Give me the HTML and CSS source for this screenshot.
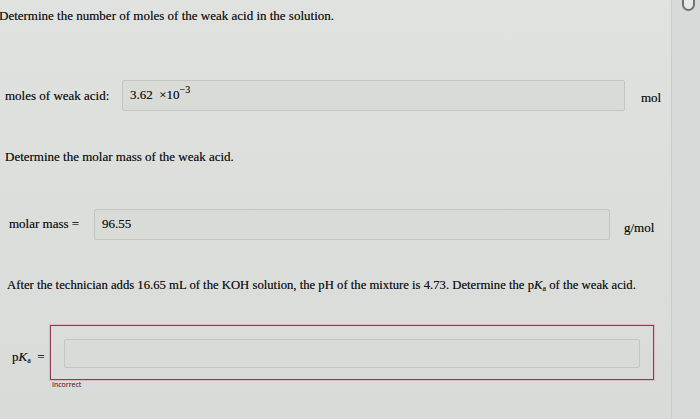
FILE: index.html
```html
<!DOCTYPE html>
<html>
<head>
<meta charset="utf-8">
<link rel="stylesheet" href="styles.css">
</head>
<body>
<div class="screen">
  <div class="page">
    <p class="q q1">Determine the number of moles of the weak acid in the solution.</p>
    <div class="row row1">
      <span class="label l1">moles of weak acid:</span>
      <div class="field f1"><span class="val">3.62 &nbsp;×10<sup>−3</sup></span></div>
      <span class="unit u1">mol</span>
    </div>
    <p class="q q2">Determine the molar mass of the weak acid.</p>
    <div class="row row2">
      <span class="label l2">molar mass =</span>
      <div class="field f2"><span class="val">96.55</span></div>
      <span class="unit u2">g/mol</span>
    </div>
    <p class="q q3">After the technician adds 16.65 mL of the KOH solution, the pH of the mixture is 4.73. Determine the p<i>K</i><sub>a</sub> of the weak acid.</p>
    <div class="row row3">
      <span class="label l3">p<i>K</i><sub>a</sub> &nbsp;=</span>
      <div class="wrong">
        <div class="field f3"></div>
        <span class="incorrect">Incorrect</span>
      </div>
    </div>
  </div>
  <div class="side">
    <span class="badge"></span>
  </div>
</div>
</body>
</html>
```
FILE: styles.css
```css
html, body {
  margin: 0;
  padding: 0;
  width: 700px;
  height: 419px;
  overflow: hidden;
  background: #dcdedb;
}
.screen {
  display: flex;
  width: 700px;
  height: 419px;
  font-family: "Liberation Serif", "Times New Roman", serif;
  color: #141515;
  text-shadow: 0 0 0.4px rgba(20, 20, 20, 0.6);
  background: linear-gradient(180deg, #e0e2df 0%, #dcdedb 50%, #d9dbd8 100%);
}
.page {
  width: 671px;
  border-right: 1px solid #c9ccca;
  box-sizing: content-box;
}
.side {
  flex: 1;
  background: #d7dad9;
  position: relative;
}
.badge {
  position: absolute;
  left: 10px;
  top: 0px;
  width: 9px;
  height: 9px;
  border: 2px solid #6f7271;
  border-top: none;
  border-radius: 0 0 7px 7px;
  background: #e8eae9;
}
.q {
  margin: 0;
  font-size: 13px;
  line-height: 16px;
}
.q1 {
  padding-top: 8px;
  text-indent: -1px;
}
.row {
  display: flex;
  align-items: center;
  font-size: 13px;
}
.field {
  height: 29px;
  background: #d9dbd7;
  border: 1px solid #c3c6c2;
  border-radius: 2px;
  box-sizing: content-box;
  display: flex;
  align-items: flex-start;
}
.val {
  padding: 6px 0 0 7px;
  font-size: 13px;
}
sup {
  font-size: 10px;
  vertical-align: 6px;
  line-height: 0;
}
sub {
  font-size: 8px;
  vertical-align: -2px;
  line-height: 0;
}
.row1 {
  margin-top: 56px;
  height: 31px;
}
.l1 {
  margin-left: 5px;
  width: 117px;
}
.f1 {
  width: 501px;
}
.u1 {
  margin-left: 16px;
  margin-top: 4px;
}
.q2 {
  margin-top: 38px;
  padding-left: 5px;
}
.row2 {
  margin-top: 44px;
  height: 31px;
}
.l2 {
  margin-left: 9px;
  width: 85px;
  margin-top: -2px;
}
.f2 {
  width: 514px;
}
.u2 {
  margin-left: 14px;
  margin-top: 6px;
}
.q3 {
  margin-top: 37px;
  padding-left: 7px;
  font-size: 12.7px;
}
.row3 {
  margin-top: 32px;
  align-items: flex-start;
}
.l3 {
  margin-left: 12px;
  width: 38px;
  margin-top: 24px;
}
.wrong {
  width: 604px;
  height: 55px;
  border: 1px solid #8c3a4c;
  box-shadow: 0 0 0 1px #e4b8c0;
  position: relative;
  padding: 13px 0 0 13px;
  box-sizing: border-box;
}
.f3 {
  width: 574px;
  height: 27px;
}
.incorrect {
  position: absolute;
  left: 1px;
  top: 54px;
  font-family: "Open Sans", "Liberation Sans", sans-serif;
  font-size: 7px;
  color: #8a3a4a;
}
```
